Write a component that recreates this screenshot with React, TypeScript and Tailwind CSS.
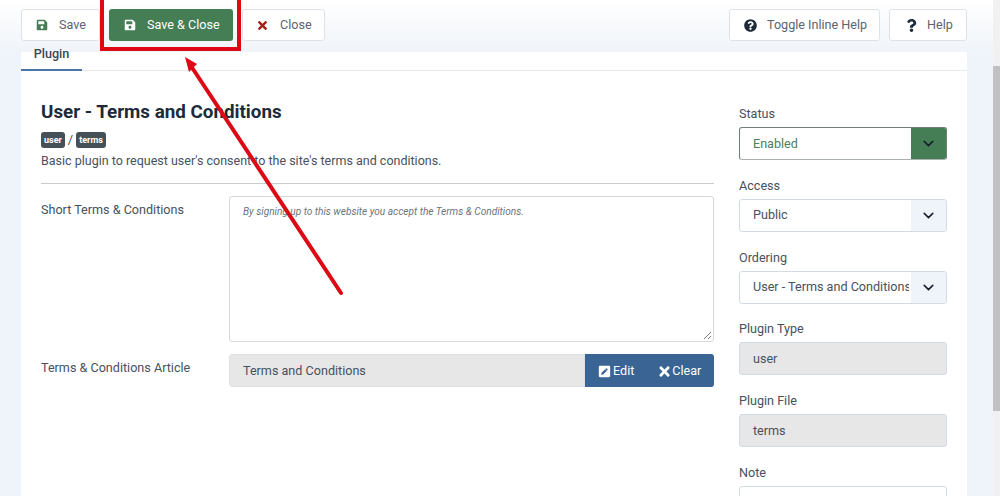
import React from "react";
import { FaSave, FaTimes, FaQuestionCircle, FaQuestion, FaPenSquare } from "react-icons/fa";
import { ChevronDown } from "lucide-react";

function TB({ icon, label, className = "", gap = "gap-[11px]" }: { icon: React.ReactNode; label: string; className?: string; gap?: string }) {
  return (
    <button className={`h-[32px] flex items-center rounded-[3px] border border-[#dfe3e7] bg-white text-[12.6px] text-[#5b6470] ${gap} ${className}`}>
      {icon}
      <span>{label}</span>
    </button>
  );
}

function Sel({ label, value, green, clip }: { label: string; value: string; green?: boolean; clip?: boolean }) {
  return (
    <div className="flex flex-col">
      <label className="text-[12.6px] leading-[16px] text-[#47515d] mb-[5px]">{label}</label>
      <div className={`h-[33px] flex rounded-[3px] border overflow-hidden bg-white ${green ? "border-[#6f7f76] border-b-[#a9b0ad]" : "border-[#d5dbe3]"}`}>
        <div className={`flex-1 min-w-0 pl-[13px] pt-[1px] flex items-center text-[12.6px] whitespace-nowrap overflow-hidden ${green ? "text-[#4b7f5a]" : "text-[#47515d]"}`}>
          <span className={clip ? "block w-[156px] overflow-hidden" : ""}>{value}</span>
        </div>
        <div className={`w-[35px] flex items-center justify-center shrink-0 ${green ? "bg-[#457d54]" : "bg-[#eff4fa]"}`}>
          <ChevronDown size={17} strokeWidth={2.2} className="text-[#14202c]" />
        </div>
      </div>
    </div>
  );
}

function Ro({ label, value }: { label: string; value: string }) {
  return (
    <div className="flex flex-col">
      <label className="text-[12.6px] leading-[16px] text-[#47515d] mb-[5px]">{label}</label>
      <div className="h-[33px] flex items-center pl-[13px] pt-[1px] rounded-[3px] border border-[#d5dbe3] bg-[#e7e7e7] text-[12.6px] text-[#47515d]">{value}</div>
    </div>
  );
}

export default function App() {
  return (
    <div className="relative w-[1000px] h-[496px] overflow-hidden flex bg-[#eff4fa] font-['Roboto',sans-serif]">
      <div className="w-[993px] flex flex-col shrink-0">
        <div className="h-[52px] shrink-0 flex items-start justify-between pt-[9px] pl-[21px] pr-[26px] bg-gradient-to-b from-white to-[#f0f4f9]">
          <div className="flex gap-[9px]">
            <TB className="w-[79px] pl-[14px]" icon={<FaSave size={12} className="text-[#457d54]" />} label="Save" />
            <button className="w-[124px] h-[32px] flex items-center gap-[11px] pl-[15px] rounded-[3px] bg-[#457d54] text-white text-[12.6px]">
              <FaSave size={12} />
              <span>Save &amp; Close</span>
            </button>
            <TB className="w-[83px] pl-[13px]" gap="gap-[11px]" icon={<FaTimes size={13} className="text-[#a51f18]" />} label="Close" />
          </div>
          <div className="flex gap-[9px]">
            <TB className="w-[151px] pl-[14px]" gap="gap-[10px]" icon={<FaQuestionCircle size={13} className="text-[#1c2a3a]" />} label="Toggle Inline Help" />
            <TB className="w-[78px] pl-[15px]" gap="gap-[9px]" icon={<FaQuestion size={13} className="text-[#1c2a3a]" />} label="Help" />
          </div>
        </div>
        <div className="ml-[21px] w-[946px] flex-1 bg-white flex flex-col">
          <div className="h-[19px] shrink-0 border-b border-[#e6eaee] flex">
            <div className="w-[61px] h-[19px] border-b-[2px] border-[#4d74a5] text-center text-[12.6px] leading-[3px] font-medium text-[#3b4654]">Plugin</div>
          </div>
          <div className="flex pl-[20px] pr-[20px] pt-[29px] gap-[25px]">
            <div className="w-[673px] shrink-0">
              <h1 className="text-[18.8px] leading-[24px] font-bold text-[#1c2a3a]">User - Terms and Conditions</h1>
              <div className="flex items-center gap-[3px] mt-[8px] text-[#47515d] text-[13px] leading-[16px]">
                <span className="bg-[#465059] text-white text-[9px] font-bold rounded-[3px] px-[3px] h-[16px] flex items-center">user</span>
                <span>/</span>
                <span className="bg-[#465059] text-white text-[9px] font-bold rounded-[3px] px-[3px] h-[16px] flex items-center">terms</span>
              </div>
              <p className="text-[12.5px] leading-[16px] text-[#47515d] mt-[5px]">Basic plugin to request user's consent to the site's terms and conditions.</p>
              <div className="h-px bg-[#c8cbce] mt-[14px]"></div>
              <div className="flex mt-[12px]">
                <label className="w-[188px] shrink-0 pt-[6px] text-[12.6px] leading-[16px] text-[#47515d]">Short Terms &amp; Conditions</label>
                <div className="relative flex-1 h-[146px] rounded-[3px] border border-[#d5d8dc] bg-white pl-[13px] pt-[9px] text-[10.1px] leading-[12px] italic text-[#6b747d]">
                  By signing up to this website you accept the Terms &amp; Conditions.
                  <svg className="absolute right-[1px] bottom-[1px]" width="9" height="9" viewBox="0 0 9 9" stroke="#777" strokeWidth="1"><path d="M1 8 8 1M5 8 8 5" /></svg>
                </div>
              </div>
              <div className="flex mt-[12px]">
                <label className="w-[188px] shrink-0 pt-[6px] text-[12.6px] leading-[16px] text-[#47515d]">Terms &amp; Conditions Article</label>
                <div className="flex-1 h-[33px] flex rounded-[3px] overflow-hidden">
                  <div className="flex-1 bg-[#e7e7e7] border border-[#dcdfe3] rounded-l-[3px] pl-[13px] pt-[1px] flex items-center text-[12.6px] text-[#47515d]">Terms and Conditions</div>
                  <div className="w-[129px] bg-[#3a6493] text-white text-[12.6px] flex items-center pl-[13px] pt-[1px]">
                    <FaPenSquare size={13} className="mr-[2px]" />
                    <span>Edit</span>
                    <FaTimes size={15} className="ml-[23px]" />
                    <span>Clear</span>
                  </div>
                </div>
              </div>
            </div>
            <div className="w-[208px] shrink-0 flex flex-col gap-[17.8px] pt-[6px]">
              <Sel label="Status" value="Enabled" green />
              <Sel label="Access" value="Public" />
              <Sel label="Ordering" value="User - Terms and Conditions" clip />
              <Ro label="Plugin Type" value="user" />
              <Ro label="Plugin File" value="terms" />
              <div className="flex flex-col">
                <label className="text-[12.6px] leading-[16px] text-[#47515d] mb-[5px]">Note</label>
                <div className="h-[33px] rounded-[3px] border border-[#d5dbe3] bg-white"></div>
              </div>
            </div>
          </div>
        </div>
      </div>
      <div className="w-[7px] bg-[#f1f1f1] flex flex-col items-center">
        <div className="h-[66px] w-full"></div>
        <div className="h-[345px] w-full bg-[#c1c1c1]"></div>
      </div>
      <div className="absolute left-[100px] top-[-6px] w-[141px] h-[57px] border-[4px] border-[#dd0a15]"></div>
      <svg className="absolute left-0 top-0 pointer-events-none" width="1000" height="496">
        <line x1="341" y1="293" x2="191" y2="66" stroke="#dd0a15" strokeWidth="4" strokeLinecap="round" />
        <polygon points="185,57 197,64 189,72" fill="#dd0a15" />
      </svg>
    </div>
  );
}
